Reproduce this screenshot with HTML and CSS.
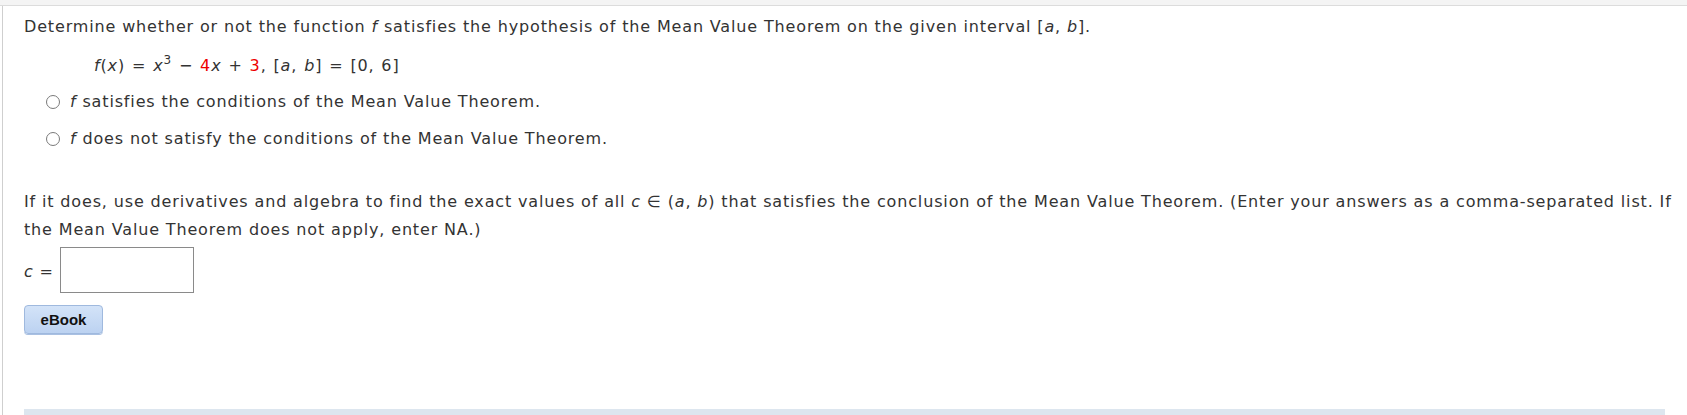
FILE: index.html
```html
<!DOCTYPE html>
<html>
<head>
<meta charset="utf-8">
<link rel="stylesheet" href="styles.css">
</head>
<body>
<div class="topband"></div>
<div class="frame">
  <div class="question">
    <p class="intro">Determine whether or not the function <i>f</i> satisfies the hypothesis of the Mean Value Theorem on the given interval [<i>a</i>, <i>b</i>].</p>
    <p class="formula"><i>f</i>(<i>x</i>) = <i>x</i><sup>3</sup> &minus; <span class="red">4</span><i>x</i> + <span class="red">3</span>, [<i>a</i>, <i>b</i>] = [0, 6]</p>
    <div class="options">
      <label class="option"><span class="radio"></span><span><i>f</i> satisfies the conditions of the Mean Value Theorem.</span></label>
      <label class="option"><span class="radio"></span><span><i>f</i> does not satisfy the conditions of the Mean Value Theorem.</span></label>
    </div>
    <p class="para">If it does, use derivatives and algebra to find the exact values of all <i>c</i> &isin; (<i>a</i>, <i>b</i>) that satisfies the conclusion of the Mean Value Theorem. (Enter your answers as a comma-separated list. If the Mean Value Theorem does not apply, enter NA.)</p>
    <div class="answer">
      <span class="label"><i>c</i> =</span>
      <span class="box"></span>
    </div>
    <button class="ebook">eBook</button>
  </div>
  <div class="bottombar"></div>
</div>
</body>
</html>
```

FILE: styles.css
```css
html, body {
  margin: 0;
  padding: 0;
  background: #ffffff;
}
body {
  font-family: "DejaVu Sans", Verdana, sans-serif;
  font-size: 16px;
  letter-spacing: 0.85px;
  color: #333333;
  line-height: 20px;
}
.topband {
  height: 5px;
  background: #f4f4f4;
  border-bottom: 1px solid #dcdcdc;
}
.frame {
  margin-left: 2px;
  border-left: 1px solid #cfcfcf;
  height: 409px;
  display: flex;
  flex-direction: column;
  padding: 0 0 0 21px;
  box-sizing: border-box;
}
.question {
  flex: 1;
  display: flex;
  flex-direction: column;
  align-items: flex-start;
  padding-right: 6px;
}
p { margin: 0; }
i { font-style: oblique; }
.intro {
  margin-top: 11px;
}
.formula {
  margin-top: 19px;
  margin-left: 70px;
  word-spacing: 1px;
}
.formula sup {
  font-size: 12px;
  line-height: 0;
  vertical-align: 7px;
}
.red { color: #ee0000; }
.options {
  margin-top: 16px;
  display: flex;
  flex-direction: column;
  gap: 17px;
}
.option {
  display: flex;
  align-items: center;
  gap: 10px;
  margin-left: 22px;
}
.radio {
  width: 14px;
  height: 14px;
  border: 1px solid #7a7a7a;
  border-radius: 50%;
  box-sizing: border-box;
  background: #fff;
}
.para {
  margin-top: 39px;
  line-height: 28px;
}
.answer {
  margin-top: 3px;
  display: flex;
  align-items: center;
  gap: 6px;
}
.label {
  padding-top: 4px;
}
.box {
  width: 134px;
  height: 46px;
  border: 1px solid #8a8a8a;
  box-sizing: border-box;
  background: #fff;
}
.ebook {
  margin-top: 12px;
  width: 79px;
  height: 29px;
  border: 1px solid #9fb9de;
  border-radius: 4px;
  background: linear-gradient(#d3e3f8, #bcd2f1);
  box-shadow: 0 1px 0 #a9c0e2;
  font-family: "Liberation Sans", Arial, sans-serif;
  font-weight: bold;
  font-size: 15px;
  letter-spacing: 0;
  color: #111;
  padding: 0;
}
.bottombar {
  height: 6px;
  margin-right: 22px;
  background: #dde6ef;
}
```
